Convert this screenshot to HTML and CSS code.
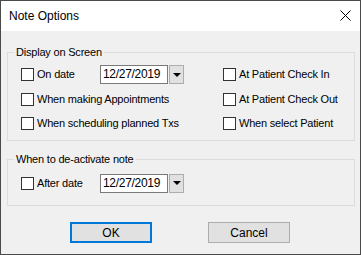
FILE: index.html
```html
<!DOCTYPE html>
<html lang="en">
<head>
    <meta charset="UTF-8">
    <title>Note Options</title>
    <link rel="stylesheet" href="styles.css">
</head>
<body>
    <div class="window">
        <div class="titlebar">
            <span class="title">Note Options</span>
            <svg class="close" width="11" height="11" viewBox="0 0 11 11">
                <path d="M0.5 0.5 L10.5 10.5 M10.5 0.5 L0.5 10.5" stroke="#000" stroke-width="1" fill="none"/>
            </svg>
        </div>
        <div class="content">
            <fieldset class="group group-display">
                <legend>Display on Screen</legend>
                <div class="options">
                    <label class="opt"><span class="box"></span>On date</label>
                    <div class="date">
                        <span class="date-field">12/27/2019</span>
                        <span class="date-drop"><span class="arrow"></span></span>
                    </div>
                    <label class="opt"><span class="box"></span>At Patient Check In</label>
                    <label class="opt wide"><span class="box"></span>When making Appointments</label>
                    <label class="opt"><span class="box"></span>At Patient Check Out</label>
                    <label class="opt wide"><span class="box"></span>When scheduling planned Txs</label>
                    <label class="opt"><span class="box"></span>When select Patient</label>
                </div>
            </fieldset>
            <fieldset class="group group-deactivate">
                <legend>When to de-activate note</legend>
                <div class="options single">
                    <label class="opt"><span class="box"></span>After date</label>
                    <div class="date">
                        <span class="date-field">12/27/2019</span>
                        <span class="date-drop"><span class="arrow"></span></span>
                    </div>
                </div>
            </fieldset>
            <div class="buttons">
                <button class="btn btn-default">OK</button>
                <button class="btn">Cancel</button>
            </div>
        </div>
    </div>
</body>
</html>
```

FILE: styles.css
```css
body {
    margin: 0;
    padding: 0;
    font-family: "Liberation Sans", Arial, sans-serif;
    font-size: 11px;
    color: #000;
}
.window {
    width: 361px;
    height: 255px;
    box-sizing: border-box;
    border: 1px solid #4a4a4a;
    background-color: #f0f0f0;
    display: flex;
    flex-direction: column;
}
.titlebar {
    height: 30px;
    background-color: #fff;
    display: flex;
    align-items: center;
    justify-content: space-between;
    padding: 0 9px 0 8px;
}
.title {
    font-size: 12px;
    line-height: 14px;
}
.close {
    display: block;
    margin-top: -1px;
}
.content {
    padding: 0 5px 0 6px;
}
.group {
    margin: 0;
    border: 1px solid #dcdcdc;
    min-width: 0;
}
.group legend {
    padding: 0 2px;
    line-height: 13px;
    letter-spacing: -0.2px;
}
.group-display {
    margin-top: 15px;
    padding: 3px 6px 5px;
}
.group-deactivate {
    margin-top: 12px;
    padding: 6px 6px 11px;
}
.options {
    display: grid;
    grid-template-columns: 79px 123px 1fr;
    grid-template-rows: 25px 24px 24px;
    margin-left: 7px;
}
.options.single {
    grid-template-rows: 22px;
}
.opt {
    display: flex;
    align-items: center;
    line-height: 13px;
    letter-spacing: -0.2px;
    white-space: nowrap;
}
.opt.wide {
    grid-column: 1 / 3;
}
.box {
    width: 13px;
    height: 13px;
    box-sizing: border-box;
    border: 1px solid #333;
    background-color: #fff;
    margin-right: 3px;
    flex-shrink: 0;
}
.date {
    display: flex;
    align-items: center;
    gap: 1px;
}
.date-field {
    width: 68px;
    height: 19px;
    box-sizing: border-box;
    border: 1px solid #7a7a7a;
    background-color: #fff;
    font-size: 12px;
    letter-spacing: -0.3px;
    line-height: 17px;
    padding-left: 2px;
}
.date-drop {
    width: 15px;
    height: 19px;
    box-sizing: border-box;
    border: 1px solid #adadad;
    background-color: #e1e1e1;
    display: flex;
    align-items: center;
    justify-content: center;
}
.arrow {
    width: 0;
    height: 0;
    border-left: 4px solid transparent;
    border-right: 4px solid transparent;
    border-top: 4px solid #000;
}
.buttons {
    display: flex;
    justify-content: center;
    gap: 56px;
    margin-top: 16px;
    padding-right: 2px;
}
.btn {
    width: 82px;
    height: 21px;
    box-sizing: border-box;
    border: 1px solid #adadad;
    background-color: #e1e1e1;
    font-family: "Liberation Sans", Arial, sans-serif;
    font-size: 12px;
    color: #000;
    padding: 0;
    border-radius: 0;
}
.btn-default {
    border: 2px solid #0078d7;
}
```
